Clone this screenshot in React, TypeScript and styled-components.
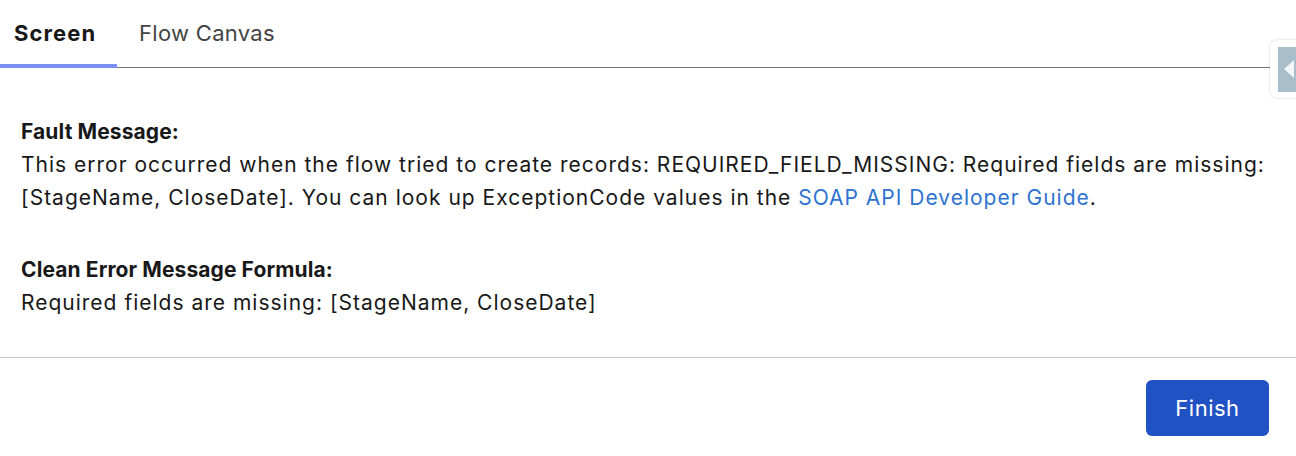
import React from "react";
import styled, { createGlobalStyle } from "styled-components";

const GlobalStyle = createGlobalStyle`
  html, body {
    margin: 0;
    padding: 0;
    background: #fff;
  }
  body {
    font-family: Inter, "Noto Sans", "Liberation Sans", sans-serif;
    color: #181818;
  }
`;

const Page = styled.div`
  position: relative;
  width: 1296px;
  height: 456px;
  overflow: hidden;
`;

const TabBar = styled.div`
  display: flex;
  height: 68px;
  border-bottom: 1px solid #747474;
  box-sizing: border-box;
`;

const Tab = styled.div<{ $active?: boolean }>`
  display: flex;
  align-items: center;
  justify-content: flex-start;
  padding: 2px 14px 0;
  min-width: ${(p) => (p.$active ? "117px" : "auto")};
  box-sizing: border-box;
  font-size: 22px;
  letter-spacing: ${(p) => (p.$active ? "1.1px" : "0.3px")};
  font-weight: ${(p) => (p.$active ? 700 : 400)};
  color: ${(p) => (p.$active ? "#181818" : "#444")};
  border-bottom: 4px solid ${(p) => (p.$active ? "#7b8ff5" : "transparent")};
  margin-bottom: -1px;
  & + & {
    padding-left: 22px;
  }
`;

const SideHandle = styled.div`
  position: absolute;
  right: -10px;
  top: 40px;
  width: 36px;
  height: 58px;
  background: #fff;
  border-radius: 8px;
  box-shadow: 0 0 3px rgba(0, 0, 0, 0.18);
  display: flex;
  align-items: center;
  padding-left: 8px;
  box-sizing: border-box;
`;

const HandleInner = styled.div`
  width: 22px;
  height: 45px;
  background: #a8becb;
  display: flex;
  align-items: center;
  padding-left: 6px;
  box-sizing: border-box;
`;

const Arrow = styled.div`
  width: 0;
  height: 0;
  border-top: 9px solid transparent;
  border-bottom: 9px solid transparent;
  border-right: 10px solid #f4f6f8;
`;

const Content = styled.div`
  padding: 47px 21px 38px;
  font-size: 21px;
  letter-spacing: 1px;
  line-height: 33px;
  border-bottom: 1px solid #c9c9c9;
`;

const Block = styled.div`
  & + & {
    margin-top: 39px;
  }
`;

const Label = styled.div`
  font-weight: 700;
  letter-spacing: 0.1px;
`;

const Link = styled.a`
  color: #2e72d2;
  text-decoration: none;
`;

const Footer = styled.div`
  display: flex;
  justify-content: flex-end;
  padding: 22px 27px;
`;

const FinishButton = styled.button`
  width: 123px;
  height: 56px;
  background: #2152c4;
  color: #fff;
  border: none;
  border-radius: 6px;
  font-family: inherit;
  font-size: 22px;
  letter-spacing: 0.5px;
  cursor: pointer;
`;

export default function App() {
  return (
    <Page>
      <GlobalStyle />
      <TabBar>
        <Tab $active>Screen</Tab>
        <Tab>Flow Canvas</Tab>
      </TabBar>
      <SideHandle>
        <HandleInner>
          <Arrow />
        </HandleInner>
      </SideHandle>
      <Content>
        <Block>
          <Label>Fault Message:</Label>
          <div>
            This error occurred when the flow tried to create records: REQUIRED_FIELD_MISSING: Required fields are
            missing: [StageName, CloseDate]. You can look up ExceptionCode values in the{" "}
            <Link href="#">SOAP API Developer Guide</Link>.
          </div>
        </Block>
        <Block>
          <Label>Clean Error Message Formula:</Label>
          <div>Required fields are missing: [StageName, CloseDate]</div>
        </Block>
      </Content>
      <Footer>
        <FinishButton>Finish</FinishButton>
      </Footer>
    </Page>
  );
}
